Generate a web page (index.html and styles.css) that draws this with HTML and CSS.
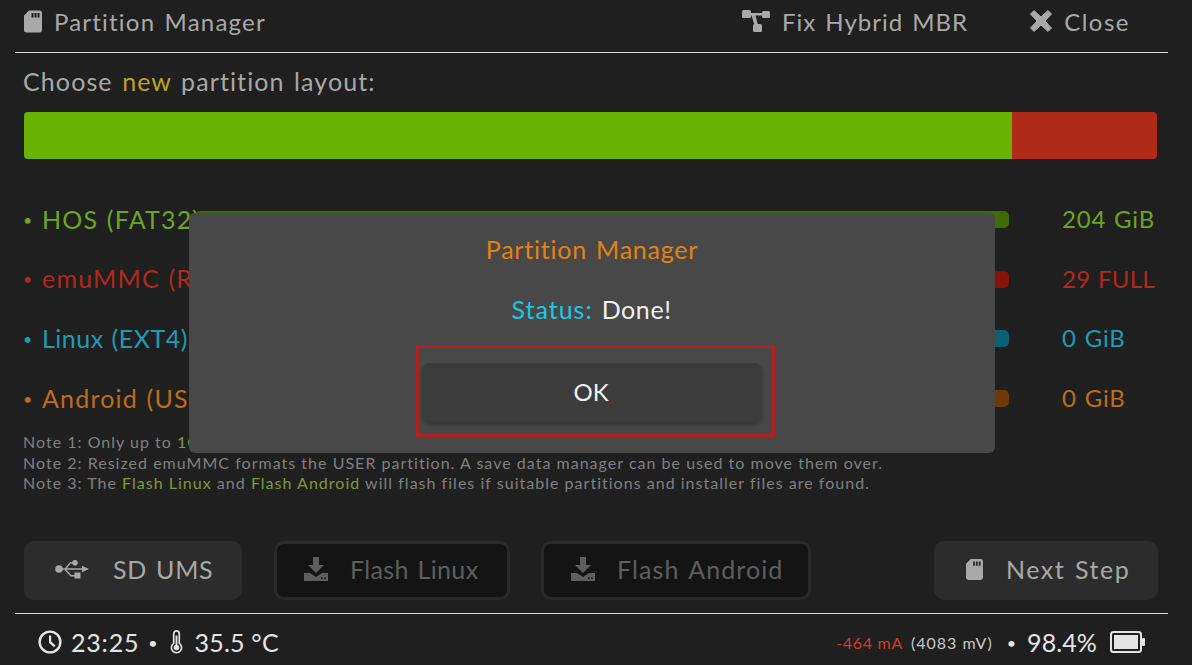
FILE: index.html
```html
<!DOCTYPE html>
<html lang="en">
<head>
<meta charset="utf-8">
<title>Partition Manager</title>
<link rel="stylesheet" href="styles.css">
</head>
<body>
<div class="app">
  <header class="topbar">
    <div class="top-title">
      <svg class="ico-sd" viewBox="0 0 18 22"><path d="M5 0h10.500A2.500 2.500 0 0 1 18 2.500V19.500A2.500 2.500 0 0 1 15.500 22H2.500A2.500 2.500 0 0 1 0 19.500V5zM7.500 2.500V7H9.500V2.500zM10.500 2.500V7H12.500V2.500zM13.500 2.500V7H15.500V2.500z" fill-rule="evenodd"/></svg>
      <span>Partition Manager</span>
    </div>
    <div class="top-action top-fix">
      <svg class="ico-net" viewBox="0 0 28 22"><rect x="0" y="0" width="9" height="8" rx="1.500"/><rect x="20" y="1" width="8" height="7" rx="1.500"/><rect x="11" y="14" width="9" height="8" rx="1.500"/><path d="M6 3h16v2.500H13.500L16 15h-3.500L9.500 5.500H6z"/></svg>
      <span>Fix Hybrid MBR</span>
    </div>
    <div class="top-action top-close">
      <svg class="ico-x" viewBox="0 0 22 22"><path d="M4 0.500 11 7 18 0.500 21.500 4 15 11 21.500 18 18 21.500 11 15 4 21.500 0.500 18 7 11 0.500 4z" stroke-width="1" stroke-linejoin="round"/></svg>
      <span>Close</span>
    </div>
  </header>

  <main class="content">
    <h1 class="heading">Choose <em class="hl-yellow">new</em> partition layout:</h1>
    <div class="bar"><div class="bar-hos"></div><div class="bar-emu"></div></div>

    <div class="rows">
      <div class="row c-green"><span class="row-label"><span class="bul">•</span>HOS (FAT32)</span><span class="track t-green"></span><span class="row-val">204 GiB</span></div>
      <div class="row c-red"><span class="row-label"><span class="bul">•</span>emuMMC (RAW)</span><span class="track t-red"></span><span class="row-val">29 FULL</span></div>
      <div class="row c-teal"><span class="row-label"><span class="bul">•</span>Linux (EXT4)</span><span class="track t-teal"></span><span class="row-val">0 GiB</span></div>
      <div class="row c-orange"><span class="row-label"><span class="bul">•</span>Android (USER)</span><span class="track t-orange"></span><span class="row-val">0 GiB</span></div>
    </div>

    <div class="notes">
      <p>Note 1: Only up to <em class="hl-olive">1GB</em> can be backed up. If more, you will be asked to back them manually at the next step.</p>
      <p>Note 2: Resized emuMMC formats the USER partition. A save data manager can be used to move them over.</p>
      <p>Note 3: The <em class="hl-olive">Flash Linux</em> and <em class="hl-olive">Flash Android</em> will flash files if suitable partitions and installer files are found.</p>
    </div>

    <div class="buttons">
      <button class="btn btn-ums">
        <svg class="ico-usb" viewBox="0 0 34 20"><circle cx="4" cy="10" r="3.800"/><path d="M4 9.300H27V6.800L34 10 27 13.200V10.700H4z"/><path d="M9.500 9.700 15 3.200H19V4.600H15.700L11 10.300zM10.800 10 16.300 16H21V17.400H15.700L9.300 10.700z"/><circle cx="20" cy="3.800" r="2.800"/><rect x="19.500" y="13.500" width="6" height="6"/></svg>
        <span>SD UMS</span>
      </button>
      <button class="btn btn-off btn-linux">
        <svg class="ico-dl" viewBox="0 0 24 24"><path d="M9 0h6v8h5l-8 8-8-8h5z"/><path d="M0 16h6l6 4 6-4h6v8H0zM17 20.500v1.500h1.700v-1.500zM20 20.500v1.500h1.700v-1.500z" fill-rule="evenodd"/></svg>
        <span>Flash Linux</span>
      </button>
      <button class="btn btn-off btn-android">
        <svg class="ico-dl" viewBox="0 0 24 24"><path d="M9 0h6v8h5l-8 8-8-8h5z"/><path d="M0 16h6l6 4 6-4h6v8H0zM17 20.500v1.500h1.700v-1.500zM20 20.500v1.500h1.700v-1.500z" fill-rule="evenodd"/></svg>
        <span>Flash Android</span>
      </button>
      <button class="btn btn-next">
        <svg class="ico-sd-small" viewBox="0 0 18 22"><path d="M5 0h10.500A2.500 2.500 0 0 1 18 2.500V19.500A2.500 2.500 0 0 1 15.500 22H2.500A2.500 2.500 0 0 1 0 19.500V5zM7.500 2.500V7H9.500V2.500zM10.500 2.500V7H12.500V2.500zM13.500 2.500V7H15.500V2.500z" fill-rule="evenodd"/></svg>
        <span>Next Step</span>
      </button>
    </div>
  </main>

  <footer class="footer">
    <svg class="ico-clock" viewBox="0 0 24 24"><circle cx="12" cy="12" r="10.400" fill="none" stroke-width="2.400"/><path d="M11 5.500h2.200V11.500L17.500 15.500 16 17.200 11 12.700z" class="fill"/></svg>
    <span class="ft-time">23:25</span>
    <span class="ft-dot">•</span>
    <svg class="ico-therm" viewBox="0 0 14 26"><path d="M4 14.500V4a3 3 0 0 1 6 0V14.500a5.500 5.500 0 1 1-6 0z" fill="none" stroke-width="1.800"/><circle cx="7" cy="19" r="3" class="fill"/><rect x="6" y="6" width="2" height="12" class="fill"/></svg>
    <span class="ft-temp">35.5 °C</span>
    <span class="ft-spacer"></span>
    <span class="ft-ma">-464 mA</span>
    <span class="ft-mv">(4083 mV)</span>
    <span class="ft-dot ft-dot2">•</span>
    <span class="ft-pct">98.4%</span>
    <svg class="ico-batt" viewBox="0 0 36 22"><rect x="1" y="1" width="30" height="20" rx="2.500" fill="none" stroke-width="2"/><rect x="4" y="4" width="24" height="14" class="fill"/><rect x="32" y="7" width="3" height="8" rx="1" class="fill"/></svg>
  </footer>

  <div class="modal">
    <div class="modal-title">Partition Manager</div>
    <div class="modal-status"><span class="st-label">Status:</span> Done!</div>
    <div class="ok-focus"><button class="ok-btn">OK</button></div>
  </div>
</div>
</body>
</html>
```
FILE: styles.css
```css
* { box-sizing: border-box; }
html, body { margin: 0; padding: 0; }
body {
  background: #1f1f1f;
  font-family: "Lato", "Open Sans", sans-serif;
  color: #a8a8a8;
  overflow: hidden;
}
em { font-style: normal; }
svg { display: block; flex: none; fill: currentColor; stroke: currentColor; stroke-width: 0; }
.app { position: relative; width: 1192px; height: 665px; display: flex; flex-direction: column; padding: 0 24px 0 15px; }

.topbar { height: 53px; flex: none; display: flex; align-items: center; border-bottom: 1px solid #d8d8d8; font-size: 24px; letter-spacing: 1.200px; word-spacing: 2px; color: #a9a9a9; padding: 0 0 10px 9px; }
.top-title { display: flex; align-items: center; gap: 12px; }
.ico-sd { width: 18px; height: 23px; }
.top-action { display: flex; align-items: center; }
.top-fix { margin-left: auto; gap: 12px; letter-spacing: 1px; }
.ico-net { width: 28px; height: 22px; }
.top-close { margin-left: 62px; margin-right: 38px; gap: 12px; letter-spacing: 1.500px; }
.ico-x { width: 22px; height: 22px; }

.content { flex: 1; display: flex; flex-direction: column; padding-left: 8px; min-height: 0; }
.heading { margin: 12px 0 0; height: 33px; line-height: 33px; font-size: 25px; font-weight: 400; letter-spacing: 1.100px; word-spacing: 2px; color: #a8a8a8; }
.hl-yellow { color: #bba41c; }
.bar { margin: 14px 0 0 1px; display: flex; width: 1133px; height: 47px; flex: none; border-radius: 4px; overflow: hidden; }
.bar-hos { width: 988px; background: #67b100; }
.bar-emu { flex: 1; background: #b02a18; }

.rows { margin-top: 30px; display: flex; flex-direction: column; }
.row { height: 59.600px; display: flex; align-items: center; font-size: 25px; letter-spacing: 1.200px; word-spacing: 1px; }
.row-label { width: 172px; white-space: nowrap; }
.bul { display: inline-block; width: 19px; font-size: 16px; vertical-align: 3px; letter-spacing: 0; }
.track { flex: none; width: 814px; height: 17px; margin-top: 2px; border-radius: 5px; }
.row-val { margin-left: 53px; white-space: nowrap; font-size: 24px; letter-spacing: 0.800px; }
.c-green { color: #6da51c; }
.c-red { color: #ae2a1c; }
.c-red .row-val { letter-spacing: 0.300px; }
.c-teal { color: #1a9cb4; }
.c-teal .row-label { letter-spacing: 0.500px; }
.c-orange { color: #c06c14; }
.t-green { background: #3f6a04; }
.t-red { background: #861208; }
.t-teal { background: #0b6074; }
.t-orange { background: #6e3a06; }

.notes { margin-top: 5px; font-size: 16px; line-height: 20.500px; letter-spacing: 1.020px; color: #808080; }
.notes p { margin: 0; white-space: nowrap; }
.hl-olive { color: #7f9a33; }

.buttons { margin-top: 47px; display: flex; height: 59px; flex: none; margin-left: 1px; }
.btn { height: 59px; display: flex; align-items: center; border-radius: 10px; border: 0; background: #2c2c2c; color: #a8a8a8; font: inherit; font-size: 25px; letter-spacing: 1.500px; word-spacing: 2px; padding: 0 0 2px; }
.btn-ums { width: 218px; gap: 24px; padding-left: 31px; letter-spacing: 0.700px; }
.ico-usb { width: 34px; height: 20px; }
.btn-off { background: #141414; border: 3px solid #2a2a2a; color: #5e5e5e; gap: 22px; padding-left: 27px; }
.btn-linux { width: 236px; margin-left: 32px; letter-spacing: 0.350px; }
.btn-android { width: 270px; margin-left: 31px; letter-spacing: 1.100px; }
.ico-dl { width: 24px; height: 24px; }
.btn-next { width: 224px; margin-left: 123px; gap: 23px; padding-left: 32px; }
.ico-sd-small { width: 17px; height: 23px; }

.footer { margin-top: 12px; height: 52px; flex: none; border-top: 1px solid #d8d8d8; display: flex; align-items: center; padding: 5px 22px 0 23px; color: #e4e4e4; font-size: 25px; }
.ico-clock { width: 24px; height: 24px; stroke: #e4e4e4; }
.fill { fill: #e4e4e4; stroke: none; }
.ico-therm { width: 13px; height: 26px; stroke: #e4e4e4; }
.ft-time { margin-left: 9px; letter-spacing: 0.800px; }
.ft-dot { margin: 0 12px 0 9px; font-size: 16px; }
.ft-temp { margin-left: 12px; letter-spacing: 0.200px; }
.ft-spacer { flex: 1; }
.ft-ma { color: #d03c2c; font-size: 16px; letter-spacing: 0.700px; }
.ft-mv { color: #c8c8c8; font-size: 16px; letter-spacing: 1px; margin-left: 8px; }
.ft-dot2 { margin: 0 11px 0 14px; }
.ft-pct { letter-spacing: 0.100px; }
.ico-batt { width: 36px; height: 22px; margin-left: 13px; stroke: #e4e4e4; }

.modal { position: absolute; left: 189px; top: 213px; width: 806px; height: 240px; background: #484848; border-radius: 6px; display: flex; flex-direction: column; align-items: center; }
.modal-title { margin-top: 18px; height: 36px; line-height: 36px; font-size: 25px; letter-spacing: 0.770px; word-spacing: 2px; color: #e38212; }
.modal-status { margin-top: 24px; height: 36px; line-height: 36px; font-size: 25px; letter-spacing: 0.600px; word-spacing: 2px; color: #f0f0f0; margin-left: -1px; }
.st-label { color: #1dc6e2; letter-spacing: 1px; }
.ok-focus { margin: 18px 0 0 7px; width: 359px; height: 92px; border: 3px solid #b0201e; padding: 15px 0 0 3px; }
.ok-btn { display: block; width: 340px; height: 59px; border: 0; border-radius: 8px; background: #3c3c3c; color: #f0f0f0; font: inherit; font-size: 24px; box-shadow: 0 3px 4px rgba(0,0,0,0.25); padding: 0 2px 2px 0; }
```
